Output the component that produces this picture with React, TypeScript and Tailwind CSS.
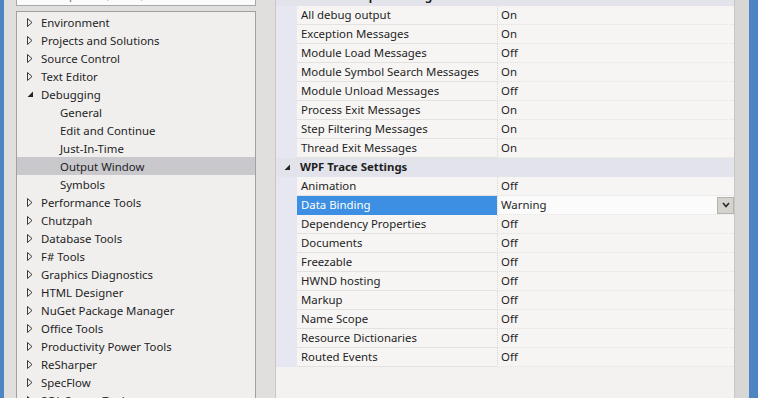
import React from "react";

const treeItems: { label: string; level: 0 | 1; state?: "collapsed" | "expanded"; selected?: boolean }[] = [
  { label: "Environment", level: 0, state: "collapsed" },
  { label: "Projects and Solutions", level: 0, state: "collapsed" },
  { label: "Source Control", level: 0, state: "collapsed" },
  { label: "Text Editor", level: 0, state: "collapsed" },
  { label: "Debugging", level: 0, state: "expanded" },
  { label: "General", level: 1 },
  { label: "Edit and Continue", level: 1 },
  { label: "Just-In-Time", level: 1 },
  { label: "Output Window", level: 1, selected: true },
  { label: "Symbols", level: 1 },
  { label: "Performance Tools", level: 0, state: "collapsed" },
  { label: "Chutzpah", level: 0, state: "collapsed" },
  { label: "Database Tools", level: 0, state: "collapsed" },
  { label: "F# Tools", level: 0, state: "collapsed" },
  { label: "Graphics Diagnostics", level: 0, state: "collapsed" },
  { label: "HTML Designer", level: 0, state: "collapsed" },
  { label: "NuGet Package Manager", level: 0, state: "collapsed" },
  { label: "Office Tools", level: 0, state: "collapsed" },
  { label: "Productivity Power Tools", level: 0, state: "collapsed" },
  { label: "ReSharper", level: 0, state: "collapsed" },
  { label: "SpecFlow", level: 0, state: "collapsed" },
  { label: "SQL Server Tools", level: 0, state: "collapsed" },
];

type Row =
  | { kind: "header"; label: string }
  | { kind: "prop"; label: string; value: string; selected?: boolean };

const rows: Row[] = [
  { kind: "header", label: "General Output Settings" },
  { kind: "prop", label: "All debug output", value: "On" },
  { kind: "prop", label: "Exception Messages", value: "On" },
  { kind: "prop", label: "Module Load Messages", value: "Off" },
  { kind: "prop", label: "Module Symbol Search Messages", value: "On" },
  { kind: "prop", label: "Module Unload Messages", value: "Off" },
  { kind: "prop", label: "Process Exit Messages", value: "On" },
  { kind: "prop", label: "Step Filtering Messages", value: "On" },
  { kind: "prop", label: "Thread Exit Messages", value: "On" },
  { kind: "header", label: "WPF Trace Settings" },
  { kind: "prop", label: "Animation", value: "Off" },
  { kind: "prop", label: "Data Binding", value: "Warning", selected: true },
  { kind: "prop", label: "Dependency Properties", value: "Off" },
  { kind: "prop", label: "Documents", value: "Off" },
  { kind: "prop", label: "Freezable", value: "Off" },
  { kind: "prop", label: "HWND hosting", value: "Off" },
  { kind: "prop", label: "Markup", value: "Off" },
  { kind: "prop", label: "Name Scope", value: "Off" },
  { kind: "prop", label: "Resource Dictionaries", value: "Off" },
  { kind: "prop", label: "Routed Events", value: "Off" },
];

function CollapsedArrow() {
  return (
    <svg width="6" height="9" viewBox="0 0 6 9" className="block">
      <path d="M0.5 0.5 L5 4.5 L0.5 8.5 Z" fill="none" stroke="#3a3a3a" strokeWidth="1" />
    </svg>
  );
}

function ExpandedArrow() {
  return (
    <svg width="7" height="7" viewBox="0 0 7 7" className="block">
      <path d="M6 0.5 L6 6 L0.5 6 Z" fill="#262626" />
    </svg>
  );
}

export default function App() {
  return (
    <div
      className="w-[758px] h-[398px] overflow-hidden flex bg-[#e1dfdd] text-[#1e1e1e] text-[11.4px]"
      style={{ fontFamily: '"Noto Sans", "Segoe UI", sans-serif' }}
    >
      <div className="w-[4px] h-full bg-[#4d84c4] shrink-0" />
      {/* Left column */}
      <div className="ml-[12px] w-[240px] shrink-0 flex flex-col">
        <div className="-mt-[16px] h-[22px] shrink-0 border border-[#aaa8a6] bg-[#fbfbfb] flex items-center px-[4px] text-[#6d6d6d]">
          <span className="flex-1 leading-none">Search Options (Ctrl+E)</span>
          <svg width="10" height="10" viewBox="0 0 10 10">
            <circle cx="6" cy="4" r="3" fill="none" stroke="#555" strokeWidth="1.3" />
            <path d="M4 6 L1 9" stroke="#555" strokeWidth="1.5" />
          </svg>
        </div>
        <div className="mt-[5px] flex-1 border border-[#a3a19f] bg-[#f0efee] pt-[1px]">
          {treeItems.map((it, i) => (
            <div
              key={i}
              className={`h-[18px] flex items-center whitespace-nowrap ${it.selected ? "bg-[#c9c8cd]" : ""}`}
            >
              {it.level === 0 ? (
                <>
                  <div className="w-[24px] pl-[10px] flex items-center">
                    {it.state === "expanded" ? <ExpandedArrow /> : <CollapsedArrow />}
                  </div>
                  <span className="pt-[1px]">{it.label}</span>
                </>
              ) : (
                <span className="pl-[43px] pt-[1px]">{it.label}</span>
              )}
            </div>
          ))}
        </div>
      </div>
      {/* Right panel */}
      <div className="ml-[19px] w-[460px] shrink-0 border-l border-r border-[#c9c7c5] bg-[#f3f2f1] flex flex-col">
        <div className="-mt-[13px] flex flex-col">
          {rows.map((r, i) =>
            r.kind === "header" ? (
              <div key={i} className="h-[19px] flex items-center bg-[#e3e3eb] border-b border-[#e3e3eb]">
                <div className="w-[21px] h-full flex items-center justify-center pl-[1px]">
                  <ExpandedArrow />
                </div>
                <span className="pl-[3px] font-bold">{r.label}</span>
              </div>
            ) : (
              <div key={i} className="h-[19px] flex">
                <div className="w-[21px] h-full bg-[#e6e7f0]" />
                <div
                  className={`w-[200px] h-full flex items-center pl-[4px] border-b whitespace-nowrap ${
                    r.selected ? "bg-[#3c8fe2] text-white border-[#3c8fe2]" : "bg-[#f6f5f4] border-[#e3e2e0]"
                  }`}
                >
                  {r.label}
                </div>
                <div
                  className={`flex-1 h-full flex items-center border-l border-dotted border-l-[#d6d5d3] border-b border-b-[#e3e2e0] pl-[3px] ${
                    r.selected ? "bg-[#fbfbfb]" : "bg-[#f6f5f4]"
                  }`}
                >
                  <span className="flex-1">{r.value}</span>
                  {r.selected && (
                    <div className="w-[17px] h-[17px] bg-[#d6d2ce] border border-[#b6b2ae] flex items-center justify-center">
                      <svg width="8" height="6" viewBox="0 0 8 6">
                        <path d="M1 1 L4 4.5 L7 1" fill="none" stroke="#2a2a2a" strokeWidth="1.6" />
                      </svg>
                    </div>
                  )}
                </div>
              </div>
            )
          )}
        </div>
      </div>
      <div className="w-[14px] shrink-0 bg-[#d9d7d5]" />
      <div className="flex-1 bg-[#4d84c4]" />
    </div>
  );
}
